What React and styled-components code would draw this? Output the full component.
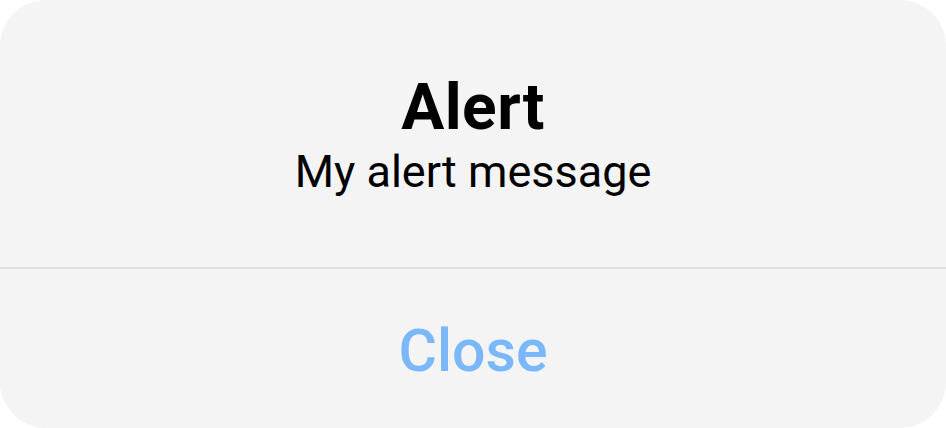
import React from 'react';
import styled, { createGlobalStyle } from 'styled-components';

const GlobalStyle = createGlobalStyle`
  html, body {
    margin: 0;
    padding: 0;
    background: #ffffff;
  }
  body {
    font-family: Roboto, "Noto Sans", sans-serif;
  }
`;

const Dialog = styled.div`
  width: 946px;
  height: 428px;
  box-sizing: border-box;
  background: #f4f4f4;
  border-radius: 46px;
  display: flex;
  flex-direction: column;
  overflow: hidden;
`;

const Body = styled.div`
  height: 269px;
  display: flex;
  flex-direction: column;
  align-items: center;
  justify-content: center;
  border-bottom: 2px solid #e0e0e0;
  box-sizing: border-box;
  padding-top: 6px;
`;

const Title = styled.h1`
  margin: 0;
  font-size: 64px;
  font-weight: 700;
  letter-spacing: 0.5px;
  line-height: 70px;
  color: #000;
`;

const Message = styled.p`
  margin: 0;
  font-size: 45px;
  font-weight: 400;
  line-height: 58px;
  color: #000;
`;

const Actions = styled.div`
  flex: 1;
  display: flex;
`;

const ActionButton = styled.button`
  flex: 1;
  border: none;
  background: transparent;
  font-family: Roboto, "Noto Sans", sans-serif;
  font-size: 59px;
  font-weight: 500;
  color: #7ab8fb;
  cursor: pointer;
  padding: 4px 0 0;
`;

export default function App() {
  return (
    <>
      <GlobalStyle />
      <Dialog>
        <Body>
          <Title>Alert</Title>
          <Message>My alert message</Message>
        </Body>
        <Actions>
          <ActionButton>Close</ActionButton>
        </Actions>
      </Dialog>
    </>
  );
}
